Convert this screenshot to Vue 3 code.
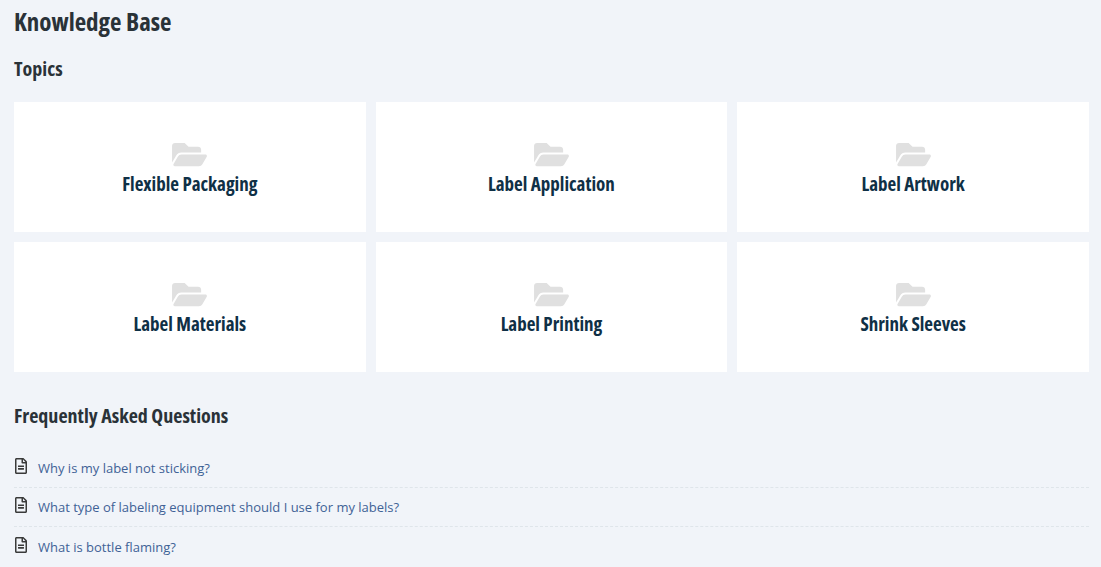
<script setup>
const topics = [
  'Flexible Packaging',
  'Label Application',
  'Label Artwork',
  'Label Materials',
  'Label Printing',
  'Shrink Sleeves',
]

const questions = [
  'Why is my label not sticking?',
  'What type of labeling equipment should I use for my labels?',
  'What is bottle flaming?',
]
</script>

<template>
  <div class="page">
    <h1 class="title">Knowledge Base</h1>
    <h2 class="subtitle">Topics</h2>

    <div class="topics">
      <a v-for="topic in topics" :key="topic" class="topic" href="#">
        <svg class="topic__icon" viewBox="0 0 576 512" fill="currentColor" aria-hidden="true">
          <path d="M572.694 292.093L500.27 416.248A63.997 63.997 0 0 1 444.989 448H45.025c-18.523 0-30.064-20.093-20.731-36.093l72.424-124.155A64 64 0 0 1 152 256h399.964c18.523 0 30.064 20.093 20.73 36.093zM152 224h328v-48c0-26.51-21.49-48-48-48H272l-64-64H48C21.49 64 0 85.49 0 112v278.046l69.077-118.418C86.214 242.25 117.989 224 152 224z" />
        </svg>
        <span class="topic__name">{{ topic }}</span>
      </a>
    </div>

    <h2 class="subtitle subtitle--faq">Frequently Asked Questions</h2>

    <ul class="faq">
      <li v-for="question in questions" :key="question" class="faq__row">
        <svg class="faq__icon" viewBox="0 0 384 512" fill="currentColor" aria-hidden="true">
          <path d="M288 248v28c0 6.6-5.4 12-12 12H108c-6.6 0-12-5.4-12-12v-28c0-6.6 5.4-12 12-12h168c6.6 0 12 5.4 12 12zm-12 72H108c-6.6 0-12 5.4-12 12v28c0 6.6 5.4 12 12 12h168c6.6 0 12-5.4 12-12v-28c0-6.6-5.4-12-12-12zm108-188.1V464c0 26.5-21.5 48-48 48H48c-26.5 0-48-21.5-48-48V48C0 21.5 21.5 0 48 0h204.1C264.8 0 277 5.1 286 14.1L369.9 98c9 8.9 14.1 21.2 14.1 33.9zm-128-80V128h76.1L256 51.9zM336 464V176H232c-13.3 0-24-10.7-24-24V48H48v416h288z" />
        </svg>
        <a class="faq__link" href="#">{{ question }}</a>
      </li>
    </ul>
  </div>
</template>

<style>
html,
body {
  background: #f1f4f9;
  overflow: hidden;
}
</style>

<style scoped>
.page {
  height: 567px;
  box-sizing: border-box;
  padding: 0 12px 0 14px;
  overflow: hidden;
  background: #f1f4f9;
  font-family: "Open Sans", "Liberation Sans", sans-serif;
}

.title,
.subtitle,
.topic__name {
  font-stretch: condensed;
  font-weight: 700;
}

.title {
  margin: 0;
  padding-top: 4px;
  font-size: 25px;
  line-height: 34px;
  color: #2a3238;
}

.subtitle {
  margin: 0;
  padding-top: 17px;
  font-size: 20px;
  line-height: 27px;
  color: #2a3238;
}

.subtitle--faq {
  padding-top: 30px;
}

.topics {
  display: grid;
  grid-template-columns: repeat(3, 1fr);
  gap: 10px;
  margin-top: 20px;
}

.topic {
  display: flex;
  flex-direction: column;
  align-items: center;
  height: 130px;
  padding-top: 37px;
  box-sizing: border-box;
  background: #fff;
  color: #0f3046;
  text-decoration: none;
}

.topic__icon {
  width: 35px;
  height: 31px;
  color: #e0e0e0;
}

.topic__name {
  margin-top: 1px;
  font-size: 19px;
  line-height: 26px;
}

.faq {
  list-style: none;
  margin: 20px 0 0;
  padding: 0;
}

.faq__row {
  display: flex;
  align-items: center;
  gap: 10px;
  height: 39px;
  box-sizing: border-box;
  border-bottom: 1px dashed #dfe5ea;
}

.faq__row:last-child {
  border-bottom: 0;
}

.faq__icon {
  width: 14px;
  height: 16px;
  margin-top: -4px;
  color: #3a3a3a;
}

.faq__link {
  font-size: 13px;
  color: #3f6296;
  text-decoration: none;
}
</style>
